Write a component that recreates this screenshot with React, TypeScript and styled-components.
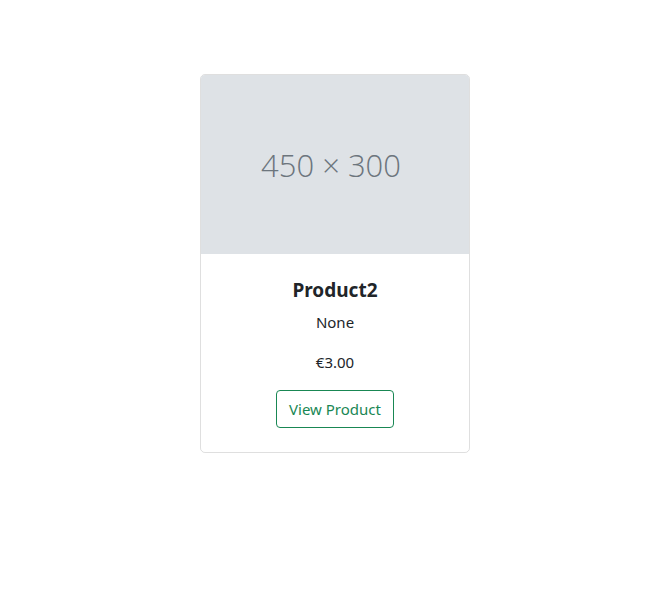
import React from "react";
import styled, { createGlobalStyle } from "styled-components";

const GlobalStyle = createGlobalStyle`
  body {
    margin: 0;
    font-family: "Noto Sans", "Open Sans", sans-serif;
    color: #212529;
    background: #fff;
  }
`;

const Page = styled.div`
  padding: 74px 0 0 200px;
`;

const Card = styled.div`
  width: 270px;
  box-sizing: border-box;
  border: 1px solid rgba(0, 0, 0, 0.125);
  border-radius: 5px;
  overflow: hidden;
  display: flex;
  flex-direction: column;
`;

const Placeholder = styled.div`
  height: 179px;
  background: #dee2e6;
  display: flex;
  align-items: center;
  justify-content: center;
  padding-right: 8px;
  color: #6c757d;
  font-family: "Open Sans", sans-serif;
  font-weight: 300;
  font-size: 31px;
`;

const Body = styled.div`
  padding: 24px 16px;
  display: flex;
  flex-direction: column;
  align-items: center;
  text-align: center;
`;

const Title = styled.h5`
  margin: 0 0 8px;
  font-size: 19px;
  font-weight: 700;
  line-height: 24px;
`;

const Text = styled.p<{ $gap: number }>`
  margin: 0 0 ${({ $gap }) => $gap}px;
  font-size: 15px;
  line-height: 24px;
`;

const OutlineButton = styled.button`
  font-family: inherit;
  font-size: 15px;
  line-height: 24px;
  padding: 6px 12px;
  color: #198754;
  background: transparent;
  border: 1px solid #198754;
  border-radius: 4px;
  cursor: pointer;
`;

export default function App() {
  return (
    <>
      <GlobalStyle />
      <Page>
        <Card>
          <Placeholder>450 × 300</Placeholder>
          <Body>
            <Title>Product2</Title>
            <Text $gap={16}>None</Text>
            <Text $gap={16}>€3.00</Text>
            <OutlineButton>View Product</OutlineButton>
          </Body>
        </Card>
      </Page>
    </>
  );
}
